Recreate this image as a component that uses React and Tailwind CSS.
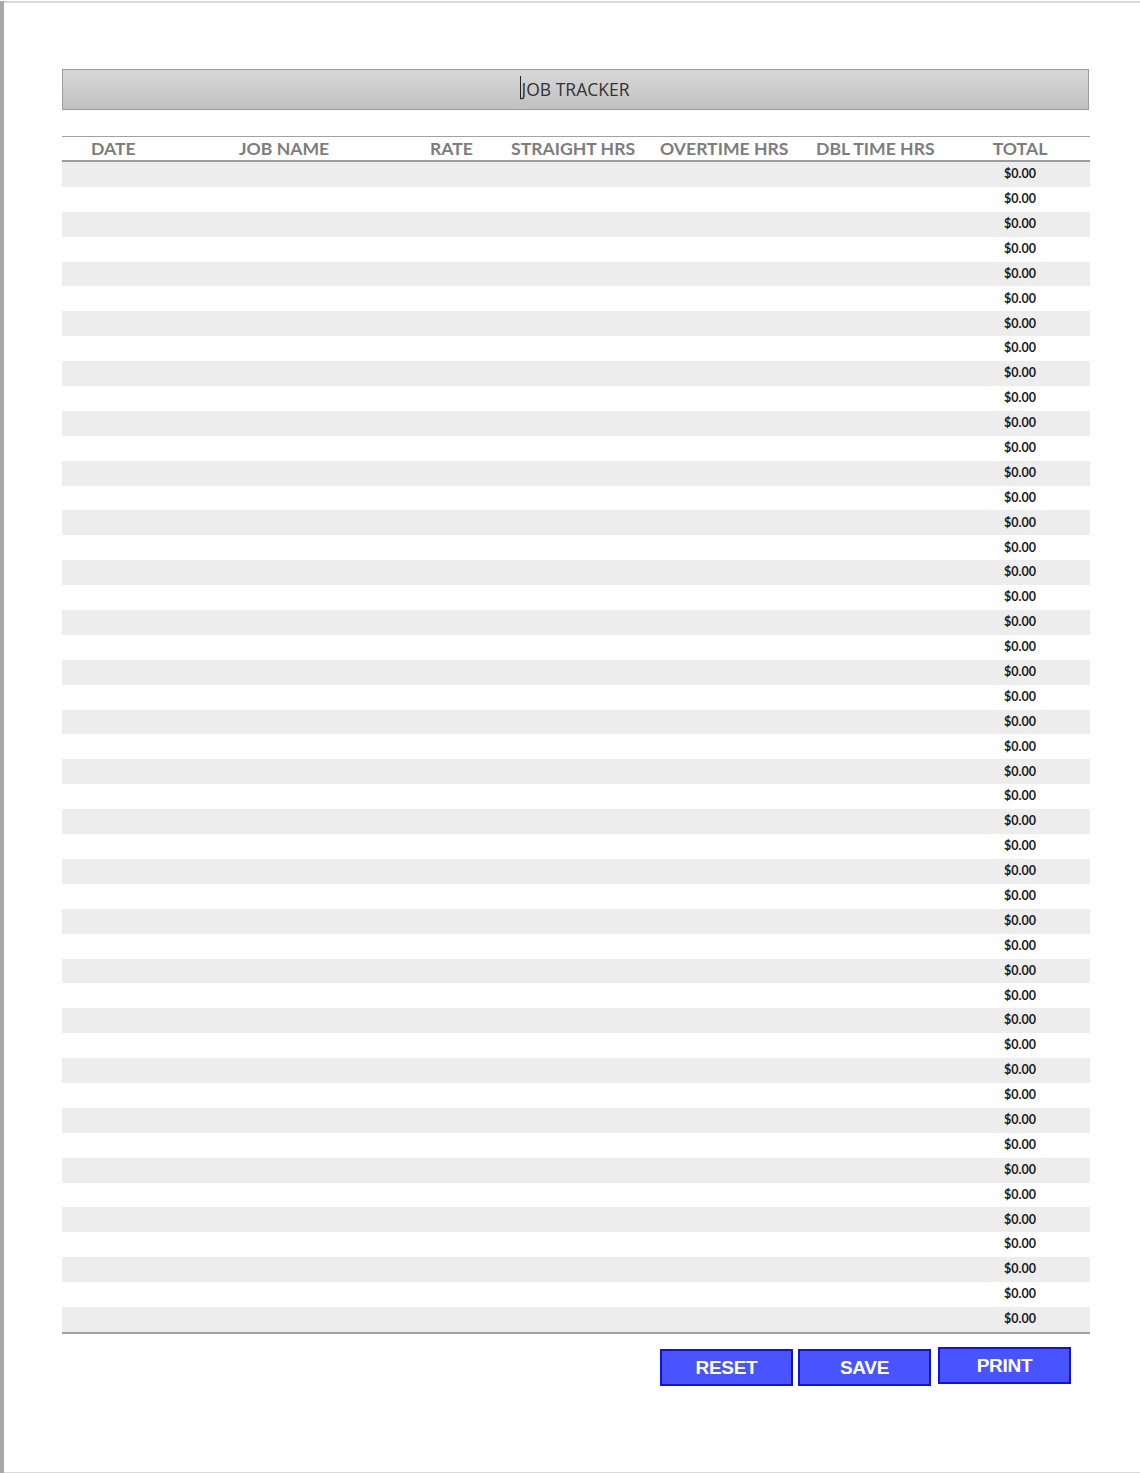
import React from "react";

const columns = [
  { label: "DATE", cls: "w-[177px] pl-[29px]" },
  { label: "JOB NAME", cls: "w-[191px]" },
  { label: "RATE", cls: "w-[81px]" },
  { label: "STRAIGHT HRS", cls: "w-[149px]" },
  { label: "OVERTIME HRS", cls: "w-[156px]" },
  { label: "DBL TIME HRS", cls: "w-[134px]" },
  { label: "TOTAL", cls: "w-[140px] text-center" },
];

const rows = Array.from({ length: 47 }, (_, i) => i);

function Button({ children, extra = "" }) {
  return (
    <button
      type="button"
      className={`w-[133px] h-[37px] bg-[#4854ff] border-2 border-[#1212d8] text-white text-[19px] font-bold tracking-[-0.3px] pt-[2px] ${extra}`}
      style={{ fontFamily: '"Liberation Sans", Arial, sans-serif' }}
    >
      {children}
    </button>
  );
}

export default function App() {
  return (
    <div className="w-[1140px] h-[1473px] bg-white border-l-4 border-[#a8a8a8]">
      <div className="h-full border-t-2 border-b-2 border-[#dadada] mt-[1px] pt-[66px] pl-[58px]">
        {/* title bar */}
        <div className="w-[1027px] h-[41px] border border-[#9b9b9b] bg-gradient-to-b from-[#d8d8d8] to-[#c1c1c1] flex items-center justify-center">
          <span
            className="relative text-[17.5px] text-[#333] leading-none"
            style={{ fontFamily: '"Open Sans", sans-serif' }}
          >
            <span className="absolute left-[-2px] top-[-5px] w-[1px] h-[23px] bg-[#222]" />
            JOB TRACKER
          </span>
        </div>

        {/* table */}
        <div
          className="w-[1028px] mt-[26px] border-t-[1.5px] border-b-2 border-[#a2a2a2]"
          style={{ fontFamily: "Lato, sans-serif" }}
        >
          <div className="flex h-[25px] items-center border-b-2 border-[#9d9d9d] text-[17.6px] font-bold text-[#7d7d7d] leading-none">
            {columns.map((c) => (
              <div key={c.label} className={c.cls}>
                {c.label}
              </div>
            ))}
          </div>
          {rows.map((i) => (
            <div
              key={i}
              className={`flex h-[24.9px] items-center ${i % 2 === 0 ? "bg-[#ededed]" : "bg-white"}`}
            >
              <div className="w-[888px]" />
              <div className="w-[140px] text-center text-[12.5px] font-bold text-[#1c1c1c] leading-none">
                $0.00
              </div>
            </div>
          ))}
        </div>

        {/* buttons */}
        <div className="flex items-start pl-[598px] mt-[13px]">
          <Button extra="mt-[2px]">RESET</Button>
          <Button extra="mt-[2px] ml-[5px]">SAVE</Button>
          <Button extra="ml-[7px]">PRINT</Button>
        </div>
      </div>
    </div>
  );
}
